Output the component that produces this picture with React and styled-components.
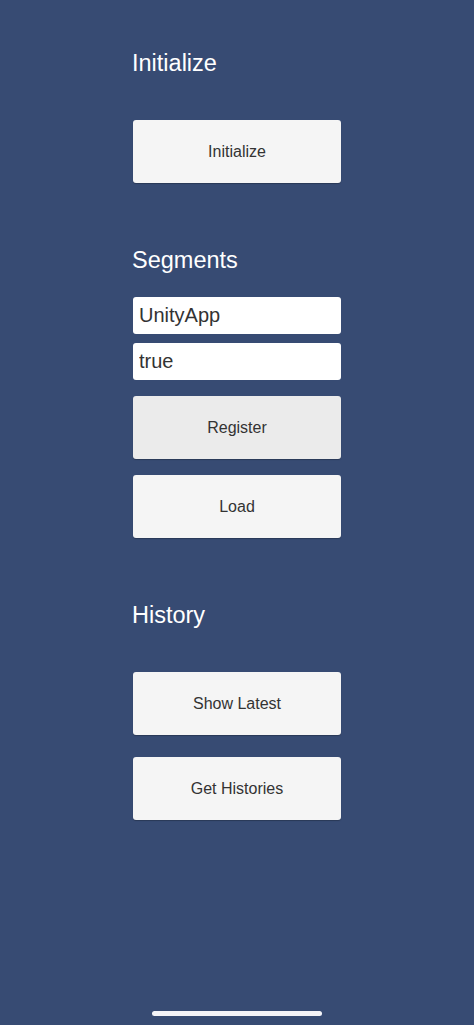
import styled, { createGlobalStyle } from "styled-components"

const Global = createGlobalStyle`
    html, body {
        margin: 0;
        padding: 0;
        background: #374b73;
    }
    body {
        font-family: "Liberation Sans", Arial, sans-serif;
    }
`

const Screen = styled.div`
    width: 474px;
    height: 1025px;
    background: #374b73;
    position: relative;
    overflow: hidden;
`

const Column = styled.div`
    width: 208px;
    margin-left: 133px;
    display: flex;
    flex-direction: column;
    padding-top: 48px;
`

const Title = styled.h2`
    margin: ${props => props.$top || 0}px 0 0 -1px;
    height: 30px;
    line-height: 30px;
    font-size: 23.5px;
    font-weight: 400;
    color: #ffffff;
`

const Boton = styled.button`
    height: 63px;
    width: 100%;
    margin-top: ${props => props.$top || 0}px;
    border: none;
    border-radius: 3px;
    background: ${props => props.$pressed ? "#ebebeb" : "#f5f5f5"};
    box-shadow: 0 1px 1px rgba(0, 0, 0, 0.25);
    font-family: "Liberation Sans", Arial, sans-serif;
    font-size: 16px;
    color: #333333;
    padding: 0;
    cursor: pointer;
`

const Campo = styled.input`
    height: 37px;
    width: 100%;
    box-sizing: border-box;
    margin-top: ${props => props.$top || 0}px;
    border: none;
    border-radius: 3px;
    background: #ffffff;
    padding: 0 6px;
    font-family: "Liberation Sans", Arial, sans-serif;
    font-size: 20px;
    color: #333333;
    outline: none;
`

const HomeBar = styled.div`
    position: absolute;
    left: 152px;
    bottom: 9px;
    width: 170px;
    height: 5px;
    border-radius: 3px;
    background: #f4f4f8;
`

const App = () => {
    return <>
        <Global />
        <Screen>
            <Column>
                <Title>Initialize</Title>
                <Boton $top={42}>Initialize</Boton>

                <Title $top={62}>Segments</Title>
                <Campo $top={22} defaultValue="UnityApp" />
                <Campo $top={9} defaultValue="true" />
                <Boton $top={16} $pressed>Register</Boton>
                <Boton $top={16}>Load</Boton>

                <Title $top={62}>History</Title>
                <Boton $top={42}>Show Latest</Boton>
                <Boton $top={22}>Get Histories</Boton>
            </Column>
            <HomeBar />
        </Screen>
    </>
}

export default App
